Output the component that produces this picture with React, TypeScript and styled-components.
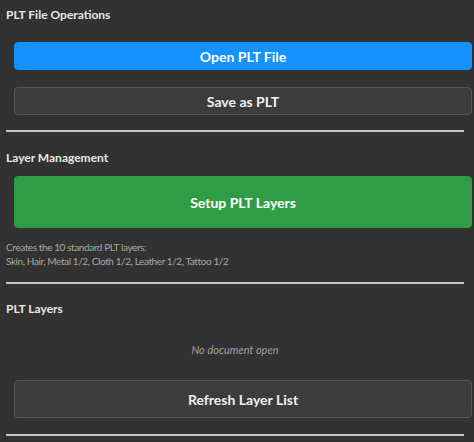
import React from 'react';
import styled, { createGlobalStyle } from 'styled-components';

const GlobalStyle = createGlobalStyle`
  html, body {
    margin: 0;
    padding: 0;
    background: #323232;
  }
  body {
    font-family: Lato, "Noto Sans", sans-serif;
    color: #e6e6e6;
    overflow: hidden;
  }
`;

const Panel = styled.div`
  width: 458px;
  padding: 0 0 0 6px;
  display: flex;
  flex-direction: column;
`;

const Section = styled.section`
  display: flex;
  flex-direction: column;
`;

const SectionTitle = styled.h3<{ $top: number }>`
  margin: ${({ $top }) => $top}px 0 0;
  font-size: 12px;
  font-weight: 700;
  line-height: 16px;
  color: #e8e8e8;
`;

const ActionButton = styled.button<{
  $variant?: 'primary' | 'cta' | 'secondary';
  $height: number;
  $top: number;
}>`
  box-sizing: border-box;
  width: 100%;
  height: ${({ $height }) => $height}px;
  margin: ${({ $top }) => $top}px 0 0 8px;
  border-radius: 4px;
  font-family: inherit;
  font-size: 14px;
  font-weight: 700;
  color: #ffffff;
  cursor: pointer;
  border: 1px solid transparent;

  ${({ $variant = 'secondary' }) =>
    $variant === 'primary'
      ? `background: #1492ff; border-color: #1492ff;`
      : $variant === 'cta'
      ? `background: #2e9d45; border-color: #2e9d45;`
      : `background: #3c3c3c; border-color: #555555; color: #f0f0f0;`}
`;

const Divider = styled.hr<{ $top: number }>`
  width: 100%;
  height: 2px;
  margin: ${({ $top }) => $top}px 0 0;
  border: none;
  background: #c6c6c6;
`;

const Note = styled.p`
  margin: 12px 0 0;
  font-size: 10px;
  line-height: 14px;
  letter-spacing: -0.4px;
  color: #a8a8a8;
`;

const Empty = styled.p`
  margin: 26px 0 0;
  text-align: center;
  font-size: 11px;
  font-style: italic;
  color: #a0a0a0;
`;

export default function App() {
  return (
    <>
      <GlobalStyle />
      <Panel>
        <Section>
          <SectionTitle $top={7}>PLT File Operations</SectionTitle>
          <ActionButton $variant="primary" $height={28} $top={19}>
            Open PLT File
          </ActionButton>
          <ActionButton $height={28} $top={17}>
            Save as PLT
          </ActionButton>
          <Divider $top={15} />
        </Section>
        <Section>
          <SectionTitle $top={18}>Layer Management</SectionTitle>
          <ActionButton $variant="cta" $height={52} $top={10}>
            Setup PLT Layers
          </ActionButton>
          <Note>
            Creates the 10 standard PLT layers:
            <br />
            Skin, Hair, Metal 1/2, Cloth 1/2, Leather 1/2, Tattoo 1/2
          </Note>
          <Divider $top={14} />
        </Section>
        <Section>
          <SectionTitle $top={17}>PLT Layers</SectionTitle>
          <Empty>No document open</Empty>
          <ActionButton $height={38} $top={24}>
            Refresh Layer List
          </ActionButton>
          <Divider $top={16} />
        </Section>
      </Panel>
    </>
  );
}
